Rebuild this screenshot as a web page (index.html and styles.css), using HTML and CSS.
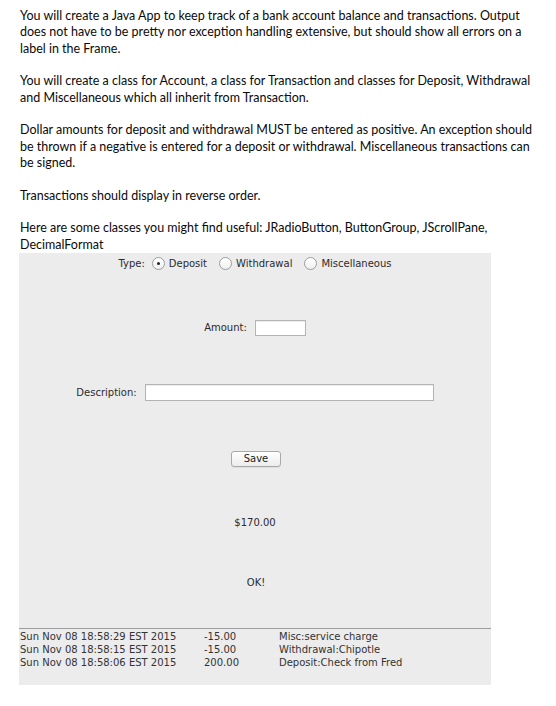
FILE: index.html
```html
<!DOCTYPE html>
<html>
<head>
<meta charset="utf-8">
<link rel="stylesheet" href="styles.css">
</head>
<body>
<div class="doc">
  <p>You will create a Java App to keep track of a bank account balance and transactions. Output<br>does not have to be pretty nor exception handling extensive, but should show all errors on a<br>label in the Frame.</p>
  <p>You will create a class for Account, a class for Transaction and classes for Deposit, Withdrawal<br>and Miscellaneous which all inherit from Transaction.</p>
  <p>Dollar amounts for deposit and withdrawal MUST be entered as positive. An exception should<br>be thrown if a negative is entered for a deposit or withdrawal. Miscellaneous transactions can<br>be signed.</p>
  <p>Transactions should display in reverse order.</p>
  <p class="last">Here are some classes you might find useful: JRadioButton, ButtonGroup, JScrollPane,<br>DecimalFormat</p>
</div>
<div class="frame">
  <div class="form">
    <div class="cell cell-type">
      <span class="lbl type-lbl">Type:</span>
      <span class="radio-item"><span class="radio checked"></span><span class="lbl">Deposit</span></span>
      <span class="radio-item"><span class="radio"></span><span class="lbl">Withdrawal</span></span>
      <span class="radio-item"><span class="radio"></span><span class="lbl">Miscellaneous</span></span>
    </div>
    <div class="cell cell-amount">
      <span class="lbl">Amount:</span>
      <span class="field field-amount"></span>
    </div>
    <div class="cell cell-desc">
      <span class="lbl">Description:</span>
      <span class="field field-desc"></span>
    </div>
    <div class="cell cell-save">
      <span class="button">Save</span>
    </div>
    <div class="cell cell-balance">
      <span class="lbl">$170.00</span>
    </div>
    <div class="cell cell-status">
      <span class="lbl">OK!</span>
    </div>
  </div>
  <div class="list">
    <div class="row"><span>Sun Nov 08 18:58:29 EST 2015</span><span>-15.00</span><span>Misc:service charge</span></div>
    <div class="row"><span>Sun Nov 08 18:58:15 EST 2015</span><span>-15.00</span><span>Withdrawal:Chipotle</span></div>
    <div class="row"><span>Sun Nov 08 18:58:06 EST 2015</span><span>200.00</span><span>Deposit:Check from Fred</span></div>
  </div>
</div>
</body>
</html>
```
FILE: styles.css
```css
html, body {
  margin: 0;
  padding: 0;
  background: #ffffff;
}
body {
  padding: 8px 0 0 19px;
}
.doc {
  font-family: Lato, "Liberation Sans", sans-serif;
  font-size: 12.5px;
  line-height: 16.33px;
  color: #0a0a0a;
  padding-left: 1px;
}
.doc p {
  margin: 0 0 16.33px 0;
  white-space: nowrap;
}
.doc p.last {
  margin-bottom: 0;
}
.frame {
  width: 472px;
  background: #ececec;
  font-family: "DejaVu Sans", sans-serif;
  font-size: 10px;
  color: #2b2b2b;
}
.form {
  display: grid;
  grid-template-rows: repeat(6, 62.5px);
}
.cell {
  display: flex;
  justify-content: center;
  align-items: center;
  align-self: start;
}
.lbl {
  line-height: 13px;
  white-space: nowrap;
}
.cell-type {
  padding-top: 4px;
}
.type-lbl {
  margin-right: 7px;
}
.radio-item {
  display: flex;
  align-items: center;
  margin-right: 12px;
}
.radio-item:last-child {
  margin-right: 0;
}
.radio {
  width: 11px;
  height: 11px;
  border-radius: 50%;
  border: 1px solid #9d9d9d;
  background: linear-gradient(#ffffff, #f0f0f0);
  margin-right: 4px;
  position: relative;
  box-sizing: content-box;
}
.radio.checked::after {
  content: "";
  position: absolute;
  left: 4px;
  top: 4px;
  width: 3px;
  height: 3px;
  border-radius: 50%;
  background: #222;
}
.cell-amount {
  padding-top: 4.5px;
}
.cell-amount .lbl,
.cell-desc .lbl {
  margin-right: 8px;
}
.field {
  display: block;
  background: #fff;
  border: 1px solid #b4b4b4;
  box-shadow: inset 0 1px 1px rgba(0, 0, 0, 0.08);
  box-sizing: border-box;
}
.field-amount {
  width: 51px;
  height: 16px;
}
.cell-desc {
  padding-top: 6px;
}
.field-desc {
  width: 289px;
  height: 17px;
}
.cell-save {
  padding-top: 10.5px;
  padding-left: 2px;
}
.button {
  display: flex;
  align-items: center;
  justify-content: center;
  width: 50px;
  height: 16px;
  box-sizing: border-box;
  border: 1px solid #a9a9a9;
  border-radius: 3px;
  background: linear-gradient(#ffffff, #ececec);
  box-shadow: 0 1px 0 rgba(0, 0, 0, 0.06);
  line-height: 13px;
  color: #222;
}
.cell-balance {
  padding-top: 13.5px;
}
.cell-status {
  padding-top: 11px;
  padding-left: 2px;
}
.list {
  border-top: 1px solid #9c9c9c;
  padding: 1px 0 16px 1px;
  color: #333;
}
.row {
  display: grid;
  grid-template-columns: 184px 75px auto;
  line-height: 13px;
  white-space: nowrap;
}
```
